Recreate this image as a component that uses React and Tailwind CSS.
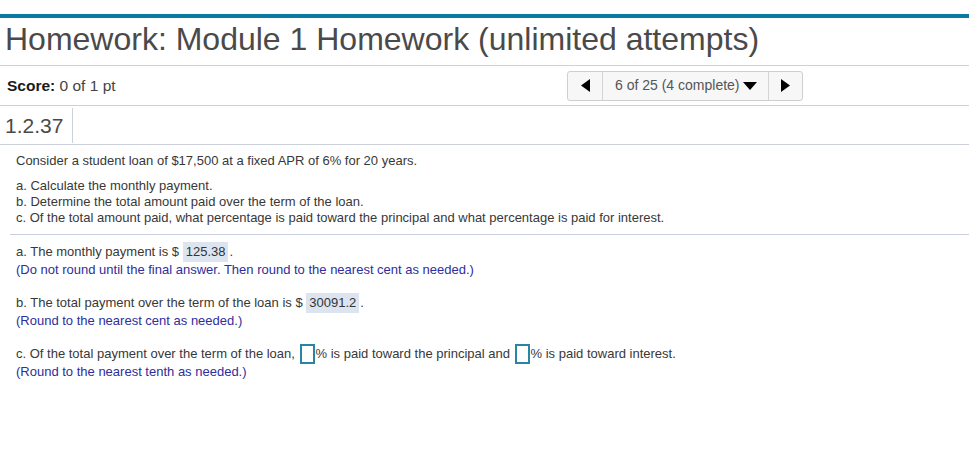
import React from 'react';

const Answer = ({ children }) => (
    <span className="inline-block h-[20px] leading-[20px] px-[3px] bg-[#dce4f0] text-[#333]">{children}</span>
);

const Blank = () => (
    <span className="inline-block align-middle w-[15px] h-[20px] border-2 border-[#2a85a5] bg-white mx-[1px]"></span>
);

const NavBox = () => (
    <div className="flex h-[30px] border border-[#cfcfcf] rounded-[3px] bg-[#f7f7f7] ml-auto mr-[166px]">
        <div className="w-[35px] flex items-center justify-center border-r border-[#d4d4d4]">
            <svg width="9" height="13" viewBox="0 0 9 13"><polygon points="9,0 9,13 0,6.5" fill="#000" /></svg>
        </div>
        <div className="w-[166px] flex items-center pl-[12px] text-[14px] text-[#555] border-r border-[#d4d4d4]">
            <span>6 of 25 (4 complete)</span>
            <svg className="ml-[3px]" width="14" height="8" viewBox="0 0 14 8"><polygon points="0,0 14,0 7,8" fill="#000" /></svg>
        </div>
        <div className="w-[33px] flex items-center justify-center">
            <svg width="9" height="13" viewBox="0 0 9 13"><polygon points="0,0 0,13 9,6.5" fill="#000" /></svg>
        </div>
    </div>
);

export default function App() {
    return (
        <div className="w-[969px] h-[462px] bg-white overflow-hidden font-['Liberation_Sans',Arial,sans-serif] pt-[14px]">
            {/* page header */}
            <div className="border-t-4 border-[#0b7aa0]">
                <h1 className="pl-[5px] pb-[4px] text-[32px] leading-[43px] text-[#4a4a4a] font-normal border-b border-[#cdd1dc] whitespace-nowrap">
                    Homework: Module 1 Homework (unlimited attempts)
                </h1>
            </div>

            {/* score + navigation */}
            <div className="flex items-center h-[40px] pl-[7px] border-b border-[#cdd1dc]">
                <div className="text-[15.5px] text-[#444] pt-[1px]">
                    <span className="font-bold text-[#1a1a1a]">Score:</span> 0 of 1 pt
                </div>
                <NavBox />
            </div>

            {/* question number */}
            <div className="flex items-center h-[39px] border-b border-[#cdd1dc]">
                <div className="w-[73px] h-[35px] leading-[35px] pl-[5px] text-[21px] text-[#4a4a4a] border-r border-[#cdd1dc]">1.2.37</div>
            </div>

            {/* question body */}
            <div className="ml-[10px] text-[13px] text-[#383838] leading-[16px]">
                <div className="pl-[6px] pt-[8px] pb-[8px] border-b border-[#c9cfdd]">
                    <p>Consider a student loan of $17,500 at a fixed APR of 6% for 20 years.</p>
                    <div className="mt-[9px]">
                        <p>a. Calculate the monthly payment.</p>
                        <p>b. Determine the total amount paid over the term of the loan.</p>
                        <p>c. Of the total amount paid, what percentage is paid toward the principal and what percentage is paid for interest.</p>
                    </div>
                </div>

                <div className="pl-[6px] pt-[7px] flex flex-col gap-[15px]">
                    <div>
                        <p className="h-[20px] leading-[20px]">a. The monthly payment is $ <Answer>125.38</Answer><span className="ml-[1px]">.</span></p>
                        <p className="text-[#2e2e9c]">(Do not round until the final answer. Then round to the nearest cent as needed.)</p>
                    </div>
                    <div>
                        <p className="h-[20px] leading-[20px]">b. The total payment over the term of the loan is $ <Answer>30091.2</Answer><span className="ml-[1px]">.</span></p>
                        <p className="text-[#2e2e9c]">(Round to the nearest cent as needed.)</p>
                    </div>
                    <div>
                        <p className="h-[20px] leading-[20px] flex items-center whitespace-pre">
                            <span>c. Of the total payment over the term of the loan, </span>
                            <Blank />
                            <span>% is paid toward the principal and </span>
                            <Blank />
                            <span>% is paid toward interest.</span>
                        </p>
                        <p className="text-[#2e2e9c]">(Round to the nearest tenth as needed.)</p>
                    </div>
                </div>
            </div>
        </div>
    );
}
